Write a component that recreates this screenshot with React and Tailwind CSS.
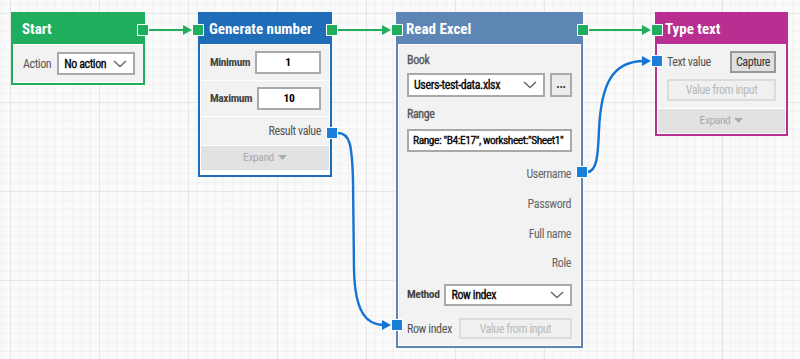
import React from "react";

const FONT = "font-['Roboto_Condensed','Liberation_Sans_Narrow','DejaVu_Sans_Condensed',Roboto,sans-serif]";
const HEAD = "h-[30px] text-white font-bold text-[15px] tracking-normal flex items-center";

function Chevron() {
  return (
    <svg width="14" height="8" viewBox="0 0 14 8" className="shrink-0">
      <polyline points="1,1 7,6.5 13,1" fill="none" stroke="#666" strokeWidth="1.4" />
    </svg>
  );
}

function Select({ className, children }) {
  return (
    <div className={`flex items-center justify-between bg-white border-2 border-[#a9a9a9] pl-[5px] pr-[6px] text-[12px] font-normal text-black ${className}`}>
      <span className="whitespace-nowrap [-webkit-text-stroke:0.3px_#000]">{children}</span>
      <Chevron />
    </div>
  );
}

function Port({ className, color }) {
  return <div className={`absolute w-[12px] h-[12px] border border-white ${color} ${className}`} />;
}

function Expand() {
  return (
    <div className="h-[24px] bg-[#e2e2e2] flex items-center justify-center gap-[4px] text-[11.5px] text-[#aaaaaa]">
      <span>Expand</span>
      <svg width="9" height="6" viewBox="0 0 9 6"><polygon points="0,0 9,0 4.5,5" fill="#aaaaaa" /></svg>
    </div>
  );
}

function Disabled({ className }) {
  return (
    <div className={`flex items-center justify-center bg-[#f0f0f0] border-2 border-[#dcdcdc] text-[12px] text-[#b9b9b9] ${className}`}>
      Value from input
    </div>
  );
}

export default function App() {
  return (
    <div
      className={`${FONT} tracking-[-0.4px] relative w-[800px] h-[359px] overflow-hidden bg-[#fafafa] [background-image:linear-gradient(to_right,#e6e6e6_1px,transparent_1px),linear-gradient(to_bottom,#e6e6e6_1px,transparent_1px),linear-gradient(to_right,#f1f1f1_1px,transparent_1px),linear-gradient(to_bottom,#f1f1f1_1px,transparent_1px)] [background-size:89px_89px,89px_89px,8.9px_8.9px,8.9px_8.9px] [background-position:10px_13px,10px_13px,10px_13px,10px_13px]`}
    >
      {/* Start */}
      <div className="absolute left-[11px] top-[12px] w-[134px] h-[73px] border-2 border-[#1fae5e] bg-white flex flex-col overflow-hidden">
        <div className={`${HEAD} bg-[#1fae5e] px-[9px]`}>Start</div>
        <div className="flex-1 p-px flex">
          <div className="flex-1 bg-[#f2f2f2] flex items-center gap-[6px] pl-[9px] pr-[10px]">
            <span className="text-[12px] text-[#555]">Action</span>
            <Select className="w-[78px] h-[23px]">No action</Select>
          </div>
        </div>
      </div>

      {/* Generate number */}
      <div className="absolute left-[198px] top-[12px] w-[134px] h-[165px] border-2 border-[#1f6cb8] bg-white flex flex-col overflow-hidden">
        <div className={`${HEAD} bg-[#1f6cb8] px-[9px]`}>Generate number</div>
        <div className="flex-1 p-px flex flex-col gap-px">
          <div className="h-[35px] bg-[#f2f2f2] flex items-center justify-between pl-[9px] pr-[8px]">
            <span className="text-[11.5px] font-bold text-[#444]">Minimum</span>
            <div className="w-[66px] h-[23px] bg-white border-2 border-[#a9a9a9] flex items-center justify-center text-[11.5px] font-bold text-black">1</div>
          </div>
          <div className="h-[35px] bg-[#f2f2f2] flex items-center justify-between pl-[9px] pr-[8px]">
            <span className="text-[11.5px] font-bold text-[#444]">Maximum</span>
            <div className="w-[64px] h-[23px] bg-white border-2 border-[#a9a9a9] flex items-center justify-center text-[11.5px] font-bold text-black">10</div>
          </div>
          <div className="h-[28px] bg-[#f2f2f2] flex items-center justify-end pr-[8px] text-[12px] text-[#555]">Result value</div>
          <Expand />
        </div>
      </div>

      {/* Read Excel */}
      <div className="absolute left-[396px] top-[12px] w-[187px] h-[336px] border-2 border-[#5e86b4] bg-white flex flex-col overflow-hidden">
        <div className={`${HEAD} bg-[#5e86b4] px-[8px]`}>Read Excel</div>
        <div className="flex-1 p-px flex min-w-0">
          <div className="flex-1 min-w-0 bg-[#f2f2f2] flex flex-col px-[8px] pt-[7px]">
            <div className="text-[12px] text-[#555] h-[16px] leading-[16px] [-webkit-text-stroke:0.3px_#555]">Book</div>
            <div className="flex gap-[5px] mt-[5px]">
              <Select className="w-[138px] h-[24px]">Users-test-data.xlsx</Select>
              <div className="w-[22px] h-[24px] bg-[#ececec] border-2 border-[#aaaaaa] flex items-center justify-center text-[12px] font-bold text-[#333] leading-none pb-[3px]">...</div>
            </div>
            <div className="text-[12px] text-[#555] h-[16px] leading-[16px] mt-[9px] [-webkit-text-stroke:0.3px_#555]">Range</div>
            <div className="mt-[7px] h-[23px] bg-white border-2 border-[#a9a9a9] flex items-center px-[4px] text-[11.5px] tracking-[-0.45px] text-black whitespace-nowrap overflow-hidden [-webkit-text-stroke:0.3px_#000]">Range: "B4:E17", worksheet:"Sheet1"</div>
            <div className="mt-[14px] flex flex-col items-end text-[12px] text-[#666] pr-[1px]">
              <div className="h-[30px] leading-[16px]">Username</div>
              <div className="h-[30px] leading-[16px]">Password</div>
              <div className="h-[29px] leading-[16px]">Full name</div>
              <div className="h-[16px] leading-[16px]">Role</div>
            </div>
            <div className="flex items-center gap-[5px] mt-[13px]">
              <span className="text-[11.5px] font-bold text-[#444]">Method</span>
              <Select className="flex-1 h-[22px]">Row index</Select>
            </div>
            <div className="flex items-center gap-[7px] mt-[12px]">
              <span className="text-[12px] text-[#555]">Row index</span>
              <Disabled className="flex-1 h-[21px]" />
            </div>
          </div>
        </div>
      </div>

      {/* Type text */}
      <div className="absolute left-[655px] top-[12px] w-[133px] h-[124px] border-2 border-[#b92e91] bg-white flex flex-col overflow-hidden">
        <div className={`${HEAD} bg-[#b92e91] px-[8px]`}>Type text</div>
        <div className="flex-1 p-px flex flex-col gap-px">
          <div className="flex-1 bg-[#f2f2f2] flex flex-col px-[9px] pt-[6px] pb-[4px] gap-[6px]">
            <div className="flex items-center justify-between">
              <span className="text-[12px] text-[#555]">Text value</span>
              <div className="w-[46px] h-[22px] bg-[#e0e0e0] border-2 border-[#999] flex items-center justify-center text-[12px] text-[#333]">Capture</div>
            </div>
            <Disabled className="h-[22px]" />
          </div>
          <Expand />
        </div>
      </div>

      {/* Connections */}
      <svg className="absolute inset-0 pointer-events-none" width="800" height="359" viewBox="0 0 800 359">
        <g stroke="#1fae5e" strokeWidth="2.2" fill="none">
          <line x1="148" y1="30" x2="185" y2="30" />
          <line x1="338" y1="30" x2="384" y2="30" />
          <line x1="588" y1="30" x2="644" y2="30" />
        </g>
        <g fill="#1fae5e">
          <polygon points="183,25 192,30 183,35" />
          <polygon points="382,25 391,30 382,35" />
          <polygon points="642,25 651,30 642,35" />
        </g>
        <g stroke="#1474d4" strokeWidth="2.4" fill="none">
          <path d="M338 133 C350 133 352 145 353 180 L354 270 C355 310 365 325 384 325" />
          <path d="M587 172 C597 172 598 155 599 130 C601 85 612 61 644 61" />
        </g>
        <g fill="#1474d4">
          <polygon points="382,320 391,325 382,330" />
          <polygon points="642,56 651,61 642,66" />
        </g>
      </svg>

      {/* Ports */}
      <Port className="left-[137px] top-[24px]" color="bg-[#1fae5e]" />
      <Port className="left-[192px] top-[24px]" color="bg-[#1fae5e]" />
      <Port className="left-[326px] top-[24px]" color="bg-[#1fae5e]" />
      <Port className="left-[391px] top-[24px]" color="bg-[#1fae5e]" />
      <Port className="left-[577px] top-[24px]" color="bg-[#1fae5e]" />
      <Port className="left-[651px] top-[24px]" color="bg-[#1fae5e]" />
      <Port className="left-[326px] top-[127px]" color="bg-[#1a7fd8]" />
      <Port className="left-[391px] top-[319px]" color="bg-[#1a7fd8]" />
      <Port className="left-[576px] top-[166px]" color="bg-[#1a7fd8]" />
      <Port className="left-[651px] top-[55px]" color="bg-[#1a7fd8]" />
    </div>
  );
}
